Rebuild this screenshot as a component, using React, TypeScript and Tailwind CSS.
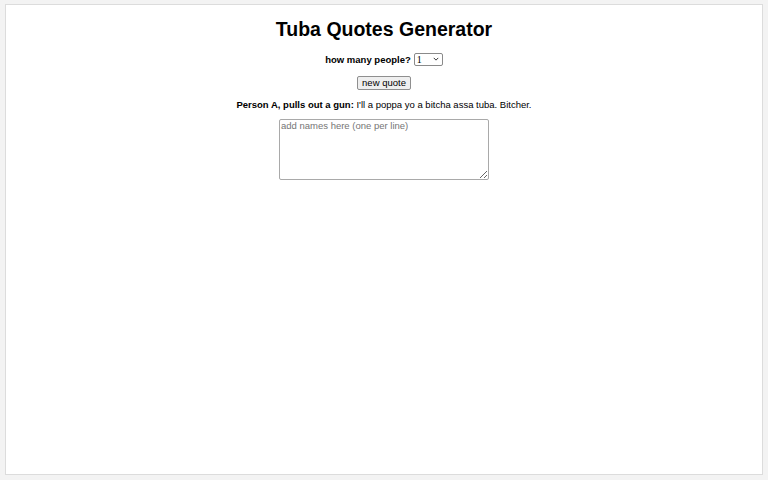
import { useState } from 'react';

const QUOTES = ["I'll a poppa yo a bitcha assa tuba. Bitcher."];

export default function App() {
  const [people, setPeople] = useState('1');
  const [names, setNames] = useState('');

  return (
    <div className="min-h-screen bg-[#f3f3f3] px-[5px] pt-[4px] pb-[5px] font-['Liberation_Sans',Arial,sans-serif] text-black">
      <div className="flex h-[471px] flex-col items-center border border-[#dcdcdc] bg-white">
        <h1 className="mt-[12px] text-[19.5px] font-bold leading-[24px]">Tuba Quotes Generator</h1>

        <div className="mt-[12px] flex items-center gap-[3px] text-[9.5px] leading-[13px]">
          <span className="font-bold">how many people?</span>
          <div className="relative h-[13px] w-[29px]">
            <select
              value={people}
              onChange={(e) => setPeople(e.target.value)}
              className="h-full w-full appearance-none rounded-[2px] border border-[#8a8a8a] bg-white pl-[2px] font-['Liberation_Serif',serif] text-[10px] leading-[11px]"
            >
              {[1, 2, 3, 4, 5].map((n) => (
                <option key={n} value={n}>
                  {n}
                </option>
              ))}
            </select>
            <svg
              viewBox="0 0 8 5"
              className="pointer-events-none absolute top-[4px] right-[4px] h-[4px] w-[6px]"
              fill="none"
              stroke="#333"
              strokeWidth="1.3"
            >
              <path d="M1 1l3 3 3-3" />
            </svg>
          </div>
        </div>

        <button
          type="button"
          className="mt-[10px] h-[14px] rounded-[2px] border border-[#8f8f8f] bg-[#efefef] px-[4px] text-[9.5px] leading-[12px]"
        >
          new quote
        </button>

        <p className="mt-[8px] text-[9.5px] leading-[13px]">
          <span className="font-bold">Person A, pulls out a gun:</span> {QUOTES[0]}
        </p>

        <textarea
          value={names}
          onChange={(e) => setNames(e.target.value)}
          placeholder="add names here (one per line)"
          className="mt-[8px] h-[61px] w-[210px] rounded-[2px] border border-[#a9a9a9] px-[1px] text-[9.5px] leading-[12px] placeholder:text-[#757575]"
        />
      </div>
    </div>
  );
}
